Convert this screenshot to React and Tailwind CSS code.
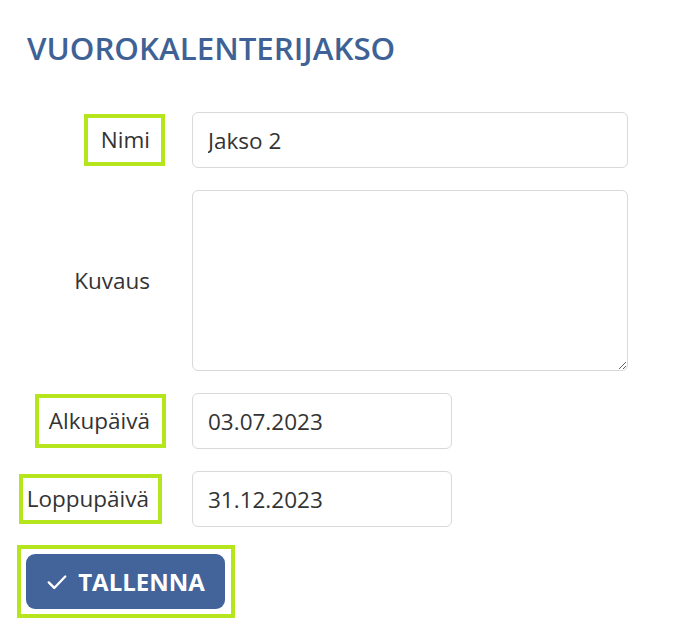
import React from 'react';

const font = { fontFamily: '"Open Sans", "Noto Sans", sans-serif' };

const Label = ({ children, className }) => (
  <div className="flex justify-end">
    <span className={`border-4 border-[#b5e61d] text-[22.5px] leading-[30px] text-[#333] ${className}`}>
      {children}
    </span>
  </div>
);

export default function App() {
  return (
    <div className="min-h-screen bg-white pt-[28px] pl-[27px]" style={font}>
      <h1 className="text-[31.3px] font-semibold leading-[40px] text-[#3f6296]">
        VUOROKALENTERIJAKSO
      </h1>

      <form className="mt-[44px] grid grid-cols-[165px_436px] gap-x-[27px] gap-y-[22px] -ml-[27px] items-center">
        <Label className="pl-[13px] pr-[11px] py-[7px]">Nimi</Label>
        <input
          defaultValue="Jakso 2"
          className="h-[56px] rounded-[6px] border border-[#d9d9d9] px-[15px] text-[22.5px] text-[#333] outline-none"
        />

        <div className="flex justify-end pr-[15px] text-[22.5px] text-[#333]">Kuvaus</div>
        <textarea className="h-[181px] rounded-[6px] border border-[#d9d9d9] px-[15px] py-[10px] text-[22.5px] text-[#333] outline-none" />

        <Label className="-mr-[1px] pl-[10px] pr-[12px] py-[8px]">Alkupäivä</Label>
        <input
          defaultValue="03.07.2023"
          className="h-[56px] w-[260px] rounded-[6px] border border-[#d9d9d9] px-[15px] text-[22.5px] text-[#333] outline-none"
        />

        <Label className="mr-[3px] pl-[4px] pr-[9px] py-[6px]">Loppupäivä</Label>
        <input
          defaultValue="31.12.2023"
          className="h-[56px] w-[260px] rounded-[6px] border border-[#d9d9d9] px-[15px] text-[22.5px] text-[#333] outline-none"
        />
      </form>

      <div className="mt-[18px] -ml-[10px] inline-block border-4 border-[#b5e61d] p-[5px] pr-[6px]">
        <button
          type="button"
          className="flex h-[55px] w-[199px] items-center justify-center gap-[10px] rounded-[9px] bg-[#42649b] text-[24px] font-bold text-white"
        >
          <svg width="22" height="22" viewBox="0 0 24 24" fill="none" stroke="white" strokeWidth="2.6" strokeLinecap="round" strokeLinejoin="round">
            <path d="M3 12.5l6 6L21 6" />
          </svg>
          TALLENNA
        </button>
      </div>
    </div>
  );
}
